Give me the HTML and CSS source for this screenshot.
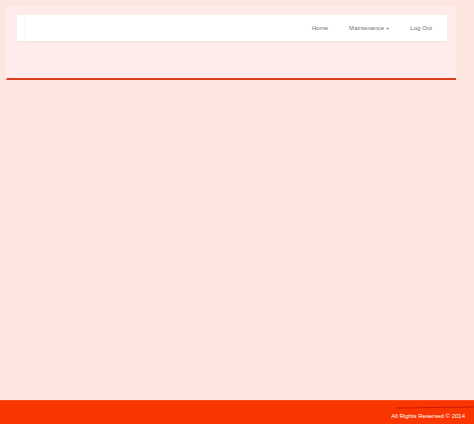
FILE: index.html
```html
<!DOCTYPE html>
<html lang="en">
<head>
<meta charset="utf-8">
<title>Maintenance</title>
<link rel="stylesheet" href="styles.css">
</head>
<body>
<div class="page">
  <header class="header-panel">
    <nav class="navbar">
      <div class="brand"></div>
      <ul class="nav-links">
        <li><a href="#">Home</a></li>
        <li><a href="#">Maintenance +</a></li>
        <li><a href="#">Log Out</a></li>
      </ul>
    </nav>
  </header>
  <main class="content"></main>
  <footer class="footer">
    <span class="footer-mark"></span>
    <span class="copyright">All Rights Reserved © 2014</span>
  </footer>
</div>
</body>
</html>
```
FILE: styles.css
```css
html, body {
  margin: 0;
  padding: 0;
  height: 100%;
}
body {
  background: #fde6df;
  font-family: "Liberation Sans", Arial, sans-serif;
}
.page {
  display: flex;
  flex-direction: column;
  min-height: 100vh;
}
.header-panel {
  margin: 6px 18px 0 6px;
  padding: 9px 9px 37px 10px;
  background: #ffebe9;
  border-left: 1px solid #fff1ee;
  border-bottom: 2px solid #d9401e;
}
.navbar {
  display: flex;
  align-items: center;
  height: 26px;
  background: #ffffff;
  box-shadow: 0 1px 1px #ece4e2;
}
.brand {
  width: 7px;
  height: 100%;
  border-right: 1px solid #fafafa;
}
.nav-links {
  display: flex;
  align-items: center;
  list-style: none;
  margin: 0 0 0 auto;
  padding: 0 15px 0 0;
  gap: 21px;
  line-height: 1;
  font-size: 6px;
}
.nav-links li {
  line-height: 1;
}
.nav-links a {
  color: #707070;
  text-decoration: none;
  font-size: 6px;
  letter-spacing: 0.05px;
}
.content {
  flex: 1;
}
.footer {
  position: relative;
  height: 24px;
  background: #f93600;
  display: flex;
  justify-content: flex-end;
  align-items: center;
  padding: 6px 9px 0 0;
  box-sizing: border-box;
  border-top: 1px solid #f94b20;
}
.copyright {
  color: #ffffff;
  font-size: 6px;
  line-height: 1;
}
.footer-mark {
  position: absolute;
  right: 0;
  top: 6px;
  width: 78px;
  height: 1px;
  background: #d2180b;
  transform: rotate(-0.6deg);
}
```
